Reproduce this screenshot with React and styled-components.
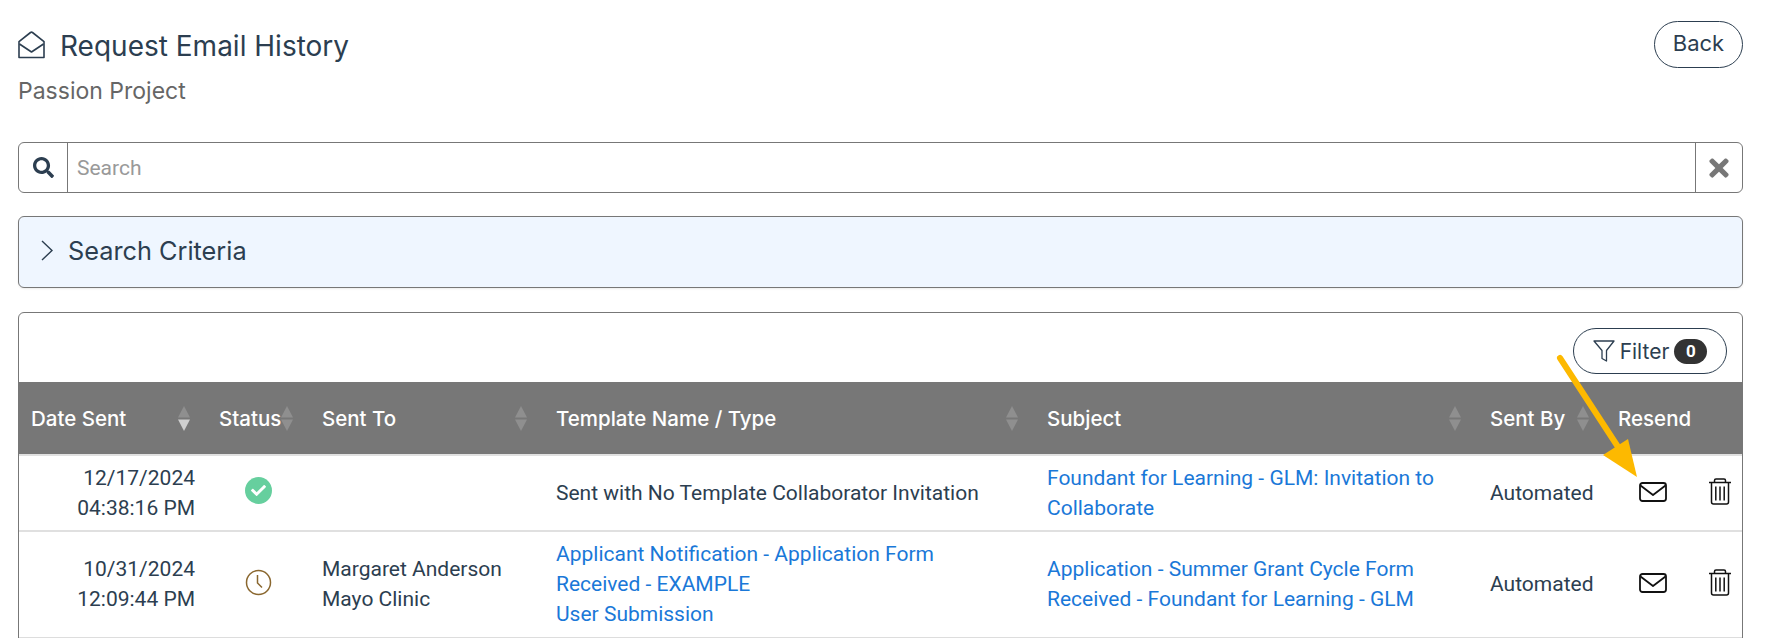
import React from "react";
import styled, { createGlobalStyle } from "styled-components";
import { FaSearch, FaTimes, FaCheck } from "react-icons/fa";

const Global = createGlobalStyle`
  html, body { margin: 0; padding: 0; background: #fff; overflow: hidden; }
  * { box-sizing: border-box; }
`;

const heading = `"Inter", "Open Sans", sans-serif`;
const body = `"Roboto", "Liberation Sans", sans-serif`;

const Page = styled.div`
  position: relative;
  height: 638px;
  overflow: hidden;
  padding: 21px 23px 0 18px;
  font-family: ${body};
  color: #2c3e50;
`;
const Header = styled.header`
  display: flex;
  justify-content: space-between;
  align-items: flex-start;
  height: 121px;
`;
const TitleBlock = styled.div`
  display: flex;
  flex-direction: column;
`;
const TitleRow = styled.div`
  display: flex;
  align-items: center;
  gap: 15px;
  height: 50px;
`;
const Title = styled.h1`
  margin: 0;
  font-family: ${heading};
  font-weight: 400;
  font-size: 28px;
  color: #2c3e50;
`;
const Sub = styled.div`
  font-family: ${heading};
  font-size: 23px;
  color: #666;
  margin-top: 4px;
  line-height: 32px;
`;
const BackButton = styled.button`
  width: 89px;
  height: 47px;
  padding: 0 0 3px;
  border: 1px solid #2c3e50;
  border-radius: 24px;
  background: #fff;
  font-family: ${heading};
  font-size: 22px;
  color: #2c3e50;
`;
const SearchBar = styled.div`
  display: flex;
  height: 51px;
  border: 1px solid #777;
  border-radius: 6px;
  margin-bottom: 23px;
`;
const Addon = styled.div`
  width: ${(p) => p.$w}px;
  flex: none;
  display: flex;
  align-items: center;
  justify-content: center;
  color: ${(p) => p.$color};
  font-size: ${(p) => p.$size}px;
  ${(p) => (p.$side === "left" ? "border-right: 1px solid #777;" : "border-left: 1px solid #777;")}
`;
const SearchInput = styled.input`
  flex: 1;
  border: 0;
  outline: 0;
  padding: 0 9px;
  font-family: ${body};
  font-size: 21px;
  background: transparent;
  &::placeholder { color: #999; opacity: 1; }
`;
const Criteria = styled.div`
  display: flex;
  align-items: center;
  gap: 15px;
  height: 72px;
  padding: 0 0 3px 22px;
  border: 1px solid #777;
  border-radius: 6px;
  background: #eff6ff;
  margin-bottom: 24px;
  box-shadow: 0 1px 2px rgba(0,0,0,.08);
`;
const CriteriaLabel = styled.span`
  font-family: ${heading};
  font-size: 25.3px;
  color: #2c3e50;
`;
const Card = styled.section`
  border: 1px solid #777;
  border-radius: 6px;
  min-height: 500px;
`;
const Toolbar = styled.div`
  display: flex;
  justify-content: flex-end;
  align-items: flex-start;
  height: 69px;
  padding: 15px 15px 0 0;
`;
const FilterButton = styled.button`
  display: flex;
  align-items: center;
  justify-content: center;
  gap: 5px;
  width: 154px;
  height: 46px;
  padding: 0;
  border: 1px solid #2c3e50;
  border-radius: 23px;
  background: #fff;
  font-family: ${heading};
  font-size: 21px;
  color: #2c3e50;
`;
const Badge = styled.span`
  display: inline-flex;
  align-items: center;
  justify-content: center;
  width: 33px;
  height: 25px;
  border-radius: 13px;
  background: #333;
  color: #fff;
  font-family: ${body};
  font-weight: 700;
  font-size: 17px;
`;
const Table = styled.table`
  width: 100%;
  table-layout: fixed;
  border-collapse: collapse;
`;
const Th = styled.th`
  height: 73px;
  background: #777;
  padding: 0 17px 0 12px;
  color: #fff;
  font-family: ${heading};
  font-weight: 500;
  font-size: 20.5px;
  text-align: left;
`;
const ThInner = styled.div`
  display: flex;
  align-items: center;
  justify-content: ${(p) => (p.$tight ? "flex-start" : "space-between")};
  white-space: nowrap;
`;
const Tr = styled.tr`
  border-top: 2px solid #e0e0e0;
  border-bottom: 1px solid #ddd;
  height: ${(p) => p.$h}px;
`;
const Td = styled.td`
  padding: 0 12px;
  font-size: 21px;
  line-height: 30px;
  vertical-align: middle;
  color: #2c3e50;
  text-align: ${(p) => p.$align || "left"};
`;
const Link = styled.a`
  color: #1a78d8;
  display: block;
`;
const CheckDisc = styled.span`
  display: inline-flex;
  align-items: center;
  justify-content: center;
  width: 27px;
  height: 27px;
  border-radius: 50%;
  background: #66cf9e;
  color: #fff;
  font-size: 15px;
  vertical-align: middle;
  margin-top: -7px;
`;
const Actions = styled.div`
  display: flex;
  align-items: center;
  gap: 42px;
  padding-left: 21px;
  margin-top: -3px;
`;
const Arrow = styled.svg`
  position: absolute;
  left: 1550px;
  top: 350px;
  pointer-events: none;
`;

const SortIcon = ({ active }) => (
  <svg width="12" height="25" viewBox="0 0 12 25" style={{ flex: "none" }}>
    <path d="M6 0 12 11.5H0Z" fill="#8f8f8f" />
    <path d="M6 25 12 13.5H0Z" fill={active ? "#cfcfcf" : "#8f8f8f"} />
  </svg>
);
const MailOpen = () => (
  <svg width="27" height="28" viewBox="0 0 27 28" fill="none" stroke="#2c3e50" strokeWidth="1.6" strokeLinejoin="round" style={{ marginTop: -3 }}>
    <path d="M1 26.5V10.6L12.5 1.5Q13.5 .8 14.5 1.5L26 10.6V26.5Z" />
    <path d="M1.5 13 13.5 21 25.5 13" />
  </svg>
);
const Chevron = () => (
  <svg width="12" height="21" viewBox="0 0 12 21" fill="none" stroke="#2c3e50" strokeWidth="1.4">
    <path d="M1 1 11 10.5 1 20" />
  </svg>
);
const Funnel = () => (
  <svg width="22" height="22" viewBox="0 0 22 22" fill="none" stroke="#2c3e50" strokeWidth="1.3" strokeLinejoin="round">
    <path d="M1 1H21L13.5 10.5V21L9 18.5V10.5Z" />
  </svg>
);
const Clock = () => (
  <svg width="27" height="27" viewBox="0 0 27 27" fill="none" stroke="#8a672f" strokeWidth="1.5" style={{ verticalAlign: "middle", marginTop: -6 }}>
    <circle cx="13.5" cy="13.5" r="12" />
    <path d="M12.5 6V14L17 18.5" />
  </svg>
);
const MailIcon = () => (
  <svg width="28" height="20" viewBox="0 0 28 20" fill="none" stroke="#111" strokeWidth="1.8" strokeLinejoin="round" style={{ flex: "none" }}>
    <rect x="1" y="1" width="26" height="18" rx="2.5" />
    <path d="M1.5 3.5 14 13 26.5 3.5" />
  </svg>
);
const TrashIcon = () => (
  <svg width="22" height="27" viewBox="0 0 22 27" fill="none" stroke="#111" strokeWidth="1.5" style={{ flex: "none" }}>
    <path d="M0 4.5H22M5.5 4.5V2.5A1.5 1.5 0 0 1 7 1H15A1.5 1.5 0 0 1 16.5 2.5V4.5" />
    <path d="M2.5 4.5V24A2 2 0 0 0 4.5 26H17.5A2 2 0 0 0 19.5 24V4.5" />
    <path d="M6.8 8.5V22.5M11 8.5V22.5M15.2 8.5V22.5" />
  </svg>
);

const columns = [
  { label: "Date Sent", w: 188, active: true },
  { label: "Status", w: 103, tight: true },
  { label: "Sent To", w: 234 },
  { label: "Template Name / Type", w: 491 },
  { label: "Subject", w: 443 },
  { label: "Sent By", w: 128 },
];

export default function App() {
  return (
    <Page>
      <Global />
      <Header>
        <TitleBlock>
          <TitleRow>
            <MailOpen />
            <Title>Request Email History</Title>
          </TitleRow>
          <Sub>Passion Project</Sub>
        </TitleBlock>
        <BackButton>Back</BackButton>
      </Header>
      <SearchBar>
        <Addon $w={49} $side="left" $color="#2c3e50" $size={21}><FaSearch /></Addon>
        <SearchInput placeholder="Search" />
        <Addon $w={47} $side="right" $color="#777" $size={28}><FaTimes /></Addon>
      </SearchBar>
      <Criteria>
        <Chevron />
        <CriteriaLabel>Search Criteria</CriteriaLabel>
      </Criteria>
      <Card>
        <Toolbar>
          <FilterButton><Funnel />Filter<Badge>0</Badge></FilterButton>
        </Toolbar>
        <Table>
          <colgroup>
            {columns.map((c) => <col key={c.label} style={{ width: c.w }} />)}
            <col />
          </colgroup>
          <thead>
            <tr>
              {columns.map((c) => (
                <Th key={c.label}>
                  <ThInner $tight={c.tight}>{c.label}<SortIcon active={c.active} /></ThInner>
                </Th>
              ))}
              <Th>Resend</Th>
            </tr>
          </thead>
          <tbody>
            <Tr $h={76}>
              <Td $align="right">12/17/2024<br />04:38:16 PM</Td>
              <Td $align="center"><CheckDisc><FaCheck /></CheckDisc></Td>
              <Td />
              <Td>Sent with No Template Collaborator Invitation</Td>
              <Td><Link>Foundant for Learning - GLM: Invitation to Collaborate</Link></Td>
              <Td>Automated</Td>
              <Td><Actions><MailIcon /><TrashIcon /></Actions></Td>
            </Tr>
            <Tr $h={106}>
              <Td $align="right">10/31/2024<br />12:09:44 PM</Td>
              <Td $align="center"><Clock /></Td>
              <Td>Margaret Anderson<br />Mayo Clinic</Td>
              <Td><Link>Applicant Notification - Application Form Received - EXAMPLE</Link><Link>User Submission</Link></Td>
              <Td><Link>Application - Summer Grant Cycle Form Received - Foundant for Learning - GLM</Link></Td>
              <Td>Automated</Td>
              <Td><Actions><MailIcon /><TrashIcon /></Actions></Td>
            </Tr>
          </tbody>
        </Table>
      </Card>
      <Arrow width="100" height="135" viewBox="0 0 100 135">
        <path d="M10 8 72 103" stroke="#fdb900" strokeWidth="6" strokeLinecap="round" fill="none" />
        <path d="M87 127 53 105 78 89Z" fill="#fdb900" />
      </Arrow>
    </Page>
  );
}
